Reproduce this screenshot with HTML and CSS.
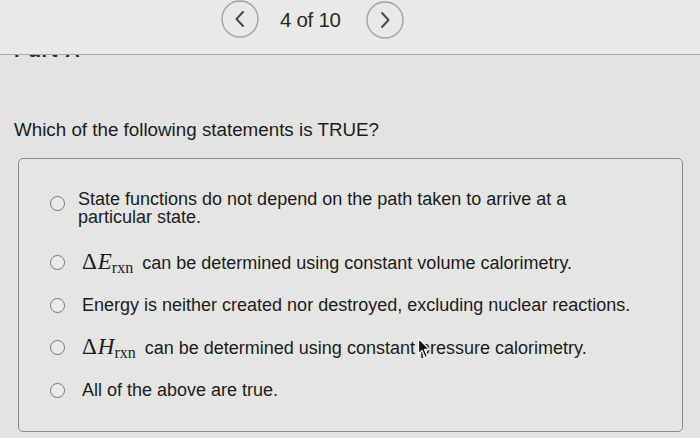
FILE: index.html
```html
<!DOCTYPE html>
<html lang="en">
<head>
<meta charset="utf-8">
<title>Question 4 of 10</title>
<link rel="stylesheet" href="styles.css">
</head>
<body>
<header class="topbar">
  <nav class="pager">
    <button class="pager-btn" aria-label="Previous">
      <svg viewBox="0 0 40 38" width="40" height="38"><circle cx="20" cy="19" r="18" fill="none" stroke="#a3a3a1" stroke-width="1.4"/><path d="M23 12 L16.5 19 L23 26" fill="none" stroke="#4a4a4a" stroke-width="2" stroke-linecap="round" stroke-linejoin="round"/></svg>
    </button>
    <span class="pager-label">4 of 10</span>
    <button class="pager-btn next" aria-label="Next">
      <svg viewBox="0 0 40 38" width="40" height="38"><circle cx="20" cy="19" r="18" fill="none" stroke="#a3a3a1" stroke-width="1.4"/><path d="M17 12 L23.5 19 L17 26" fill="none" stroke="#4a4a4a" stroke-width="2" stroke-linecap="round" stroke-linejoin="round"/></svg>
    </button>
  </nav>
</header>
<div class="part-clip"><span class="part-title">Part A</span></div>

<main class="content">
  <p class="question">Which of the following statements is TRUE?</p>
  <div class="answers">
    <label class="option first">
      <span class="radio"></span>
      <span class="opt-text">State functions do not depend on the path taken to arrive at a particular state.</span>
    </label>
    <label class="option">
      <span class="radio"></span>
      <span class="opt-text"><span class="math">Δ<i>E</i><sub>rxn</sub></span> can be determined using constant volume calorimetry.</span>
    </label>
    <label class="option">
      <span class="radio"></span>
      <span class="opt-text">Energy is neither created nor destroyed, excluding nuclear reactions.</span>
    </label>
    <label class="option">
      <span class="radio"></span>
      <span class="opt-text"><span class="math">Δ<i>H</i><sub>rxn</sub></span> can be determined using constant <span class="cursor-host">pressure<svg class="cursor" viewBox="0 0 14 22" width="14" height="22"><path d="M1.5 1.5 L1.5 17 L5 13.5 L8 20.5 L10.5 19.5 L7.5 12.5 L12.5 12.5 Z" fill="#111" stroke="#f2f2f2" stroke-width="1.3" stroke-linejoin="round"/></svg></span> calorimetry.</span>
    </label>
    <label class="option">
      <span class="radio"></span>
      <span class="opt-text">All of the above are true.</span>
    </label>
  </div>
</main>
</body>
</html>
```

FILE: styles.css
```css
html, body {
  margin: 0;
  padding: 0;
}

body {
  width: 700px;
  height: 438px;
  overflow: hidden;
  background: #e3e3e1;
  font-family: "Liberation Sans", Arial, Helvetica, sans-serif;
  color: #1c1c1c;
}

.topbar {
  background: #e9e9e7;
  border-bottom: 1.5px solid #a9a9a7;
  height: 55px;
  box-sizing: border-box;
}

.pager {
  display: flex;
  align-items: flex-start;
  padding-left: 220px;
}

.pager-btn {
  border: 0;
  background: none;
  padding: 0;
  margin: 0;
  width: 40px;
  height: 38px;
  display: block;
}

.pager-btn svg {
  display: block;
}

.pager-btn.next {
  margin-top: 1px;
}

.pager-label {
  font-size: 20.5px;
  line-height: 24px;
  color: #2a2a2a;
  margin: 8px 24px 0 20px;
  letter-spacing: -0.3px;
}

.part-clip {
  height: 4px;
  overflow: hidden;
  padding-left: 14px;
}

.part-title {
  display: block;
  font-size: 20px;
  font-weight: bold;
  line-height: 20px;
  margin-top: -15px;
  color: #2a2a2a;
  letter-spacing: 1.5px;
}

.content {
  padding: 0 17px 0 18px;
}

.question {
  margin: 60px 0 0 -4px;
  font-size: 18.8px;
  line-height: 22px;
}

.answers {
  margin-top: 17px;
  border: 1.2px solid #8a8a88;
  border-radius: 5px;
  background: #e5e5e3;
  height: 274px;
  box-sizing: border-box;
  padding: 31px 20px 0 31px;
  display: flex;
  flex-direction: column;
  gap: 22px;
}

.option {
  display: flex;
  align-items: flex-start;
  gap: 17px;
  font-size: 18px;
  line-height: 20px;
}

.option.first {
  line-height: 18px;
  margin-bottom: 4px;
}

.radio {
  flex: none;
  width: 13px;
  height: 13px;
  border: 1.6px solid #757573;
  border-radius: 50%;
  background: #ebebe9;
  margin-top: 3px;
}

.option.first .radio {
  margin-top: 6px;
}

.opt-text {
  max-width: 565px;
}

.option.first .opt-text {
  margin-left: -4px;
}

.math {
  font-family: "Liberation Serif", "Times New Roman", serif;
  font-size: 23px;
  margin-right: 4px;
}

.math i {
  font-style: italic;
  margin-left: 1px;
}

.math sub {
  font-size: 16px;
  vertical-align: -4px;
  line-height: 0;
}

.cursor-host {
  position: relative;
}

.cursor {
  position: absolute;
  left: -3px;
  top: -1px;
}
```
